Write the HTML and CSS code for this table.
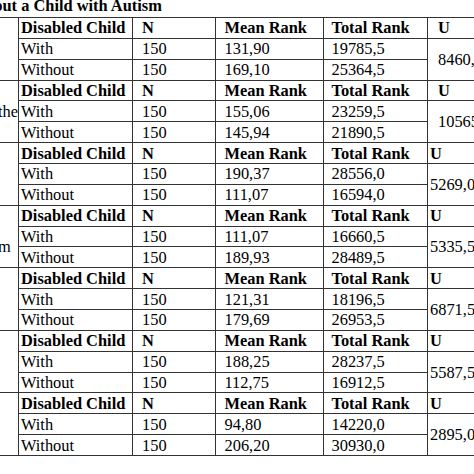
FILE: index.html
```html
<!DOCTYPE html>
<html lang="en">
<head>
<meta charset="utf-8">
<title>Mann-Whitney U Test Results</title>
<link rel="stylesheet" href="styles.css">
</head>
<body>
<div class="sheet">
  <div class="title">Table 3. Mann-Whitney U Test Results of the Sub-dimension Scores of Parent Groups<br>Both With and Without a Child with Autism</div>
  <table class="results">
    <colgroup>
      <col class="c-dim"><col class="c-grp"><col class="c-n"><col class="c-mean"><col class="c-total"><col class="c-u">
    </colgroup>
    <tbody>
      <tr>
        <td class="dim" rowspan="3">Social Life</td>
        <th>Disabled Child</th><th class="n">N</th><th class="mean">Mean Rank</th><th class="total">Total Rank</th><th class="u wide">U</th>
      </tr>
      <tr><td>With</td><td class="n">150</td><td class="mean">131,90</td><td class="total">19785,5</td><td class="u wide" rowspan="2">8460,5</td></tr>
      <tr><td>Without</td><td class="n">150</td><td class="mean">169,10</td><td class="total">25364,5</td></tr>

      <tr>
        <td class="dim" rowspan="3">Problems in<br>Communication with the<br>Spouse</td>
        <th>Disabled Child</th><th class="n">N</th><th class="mean">Mean Rank</th><th class="total">Total Rank</th><th class="u wide">U</th>
      </tr>
      <tr><td>With</td><td class="n">150</td><td class="mean">155,06</td><td class="total">23259,5</td><td class="u wide" rowspan="2">10565,5</td></tr>
      <tr><td>Without</td><td class="n">150</td><td class="mean">145,94</td><td class="total">21890,5</td></tr>

      <tr>
        <td class="dim" rowspan="3">Financial Status</td>
        <th>Disabled Child</th><th class="n">N</th><th class="mean">Mean Rank</th><th class="total">Total Rank</th><th class="u">U</th>
      </tr>
      <tr><td>With</td><td class="n">150</td><td class="mean">190,37</td><td class="total">28556,0</td><td class="u" rowspan="2">5269,0</td></tr>
      <tr><td>Without</td><td class="n">150</td><td class="mean">111,07</td><td class="total">16594,0</td></tr>

      <tr>
        <td class="dim" rowspan="3">Care and Needs<br>for a Child with Autism</td>
        <th>Disabled Child</th><th class="n">N</th><th class="mean">Mean Rank</th><th class="total">Total Rank</th><th class="u">U</th>
      </tr>
      <tr><td>With</td><td class="n">150</td><td class="mean">111,07</td><td class="total">16660,5</td><td class="u" rowspan="2">5335,5</td></tr>
      <tr><td>Without</td><td class="n">150</td><td class="mean">189,93</td><td class="total">28489,5</td></tr>

      <tr>
        <td class="dim" rowspan="3">Psychological Health</td>
        <th>Disabled Child</th><th class="n">N</th><th class="mean">Mean Rank</th><th class="total">Total Rank</th><th class="u">U</th>
      </tr>
      <tr><td>With</td><td class="n">150</td><td class="mean">121,31</td><td class="total">18196,5</td><td class="u" rowspan="2">6871,5</td></tr>
      <tr><td>Without</td><td class="n">150</td><td class="mean">179,69</td><td class="total">26953,5</td></tr>

      <tr>
        <td class="dim" rowspan="3">Family Support</td>
        <th>Disabled Child</th><th class="n">N</th><th class="mean">Mean Rank</th><th class="total">Total Rank</th><th class="u">U</th>
      </tr>
      <tr><td>With</td><td class="n">150</td><td class="mean">188,25</td><td class="total">28237,5</td><td class="u" rowspan="2">5587,5</td></tr>
      <tr><td>Without</td><td class="n">150</td><td class="mean">112,75</td><td class="total">16912,5</td></tr>

      <tr>
        <td class="dim" rowspan="3">Overall Score</td>
        <th>Disabled Child</th><th class="n">N</th><th class="mean">Mean Rank</th><th class="total">Total Rank</th><th class="u">U</th>
      </tr>
      <tr><td>With</td><td class="n">150</td><td class="mean">94,80</td><td class="total">14220,0</td><td class="u" rowspan="2">2895,0</td></tr>
      <tr><td>Without</td><td class="n">150</td><td class="mean">206,20</td><td class="total">30930,0</td></tr>
    </tbody>
  </table>
</div>
</body>
</html>
```

FILE: styles.css
```css
html, body {
  margin: 0;
  padding: 0;
  overflow: hidden;
  background: #fff;
}

body {
  font-family: "Liberation Serif", "Times New Roman", serif;
  font-size: 16.4px;
  color: #000;
}

.sheet {
  margin-left: -148px;
  margin-top: -24.5px;
}

.title {
  font-weight: bold;
  line-height: 20px;
  white-space: nowrap;
  margin-bottom: 1.5px;
}

.results {
  border-collapse: collapse;
  table-layout: fixed;
  width: 690px;
}

.c-dim { width: 166px; }
.c-grp { width: 114px; }
.c-n { width: 82.5px; }
.c-mean { width: 108px; }
.c-total { width: 104.5px; }
.c-u { width: 115px; }

.results tr {
  height: 20.86px;
}

.results td,
.results th {
  border: 1px solid #333;
  padding: 0 0 0 2px;
  line-height: 19px;
  text-align: left;
  vertical-align: middle;
  white-space: nowrap;
  font-weight: normal;
}

.results th {
  font-weight: bold;
}

.results .dim {
  padding-left: 2px;
}

.results .n { padding-left: 9px; }
.results .mean { padding-left: 9px; }
.results .total { padding-left: 8px; }
.results .u { padding-left: 2px; }
.results .u.wide { padding-left: 10px; }
```
